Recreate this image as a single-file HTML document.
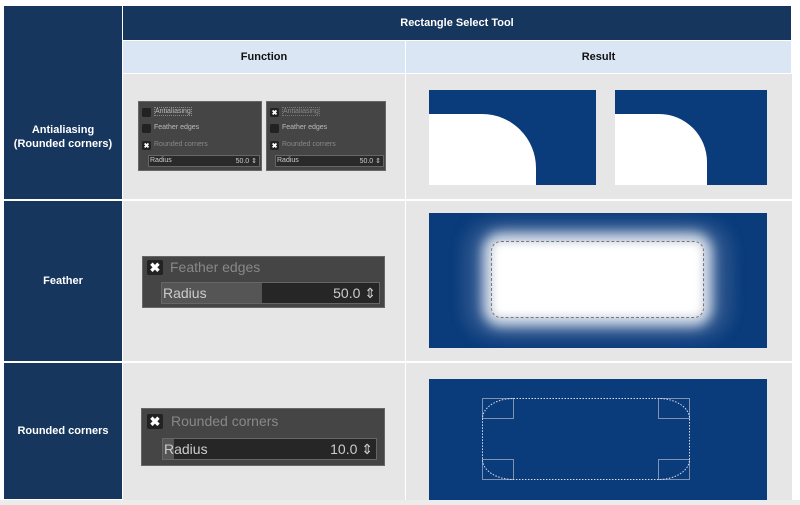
<!DOCTYPE html>
<html><head><meta charset="utf-8"><style>
*{margin:0;padding:0;box-sizing:border-box}
body{width:800px;height:505px;background:#fff;position:relative;overflow:hidden;font-family:"Liberation Sans",sans-serif}
.a{position:absolute}
.nav{background:#17365d;color:#fff;font-weight:bold;font-size:11px;display:flex;align-items:center;justify-content:center;text-align:center;line-height:14px}
.lb{background:#dbe6f5;color:#111;font-weight:bold;font-size:11px;display:flex;align-items:center;justify-content:center}
.g{background:#e6e6e6}
.w{background:#454545;border:1px solid #666}
.cb{position:absolute;background:#222;border-radius:2px;color:#fff;font-weight:bold;display:flex;align-items:center;justify-content:center}
.t{position:absolute;color:#999;white-space:nowrap}
.f{position:absolute;background:#2a2a2a;border:1px solid #666;color:#ccc}
.blue{background:#0a3b7b}
</style></head><body>
<div class="a" style="left:0;top:500px;width:800px;height:5px;background:#ececec"></div>
<div class="a nav" style="left:4px;top:6px;width:118px;height:68px"></div>
<div class="a nav" style="left:123px;top:6px;width:668px;height:34px">Rectangle Select Tool</div>
<div class="a lb" style="left:123px;top:41px;width:282px;height:32px">Function</div>
<div class="a lb" style="left:406px;top:41px;width:385px;height:32px">Result</div>
<div class="a nav" style="left:4px;top:74px;width:118px;height:125px">Antialiasing<br>(Rounded corners)</div>
<div class="a nav" style="left:4px;top:201px;width:118px;height:160px">Feather</div>
<div class="a nav" style="left:4px;top:363px;width:118px;height:136px">Rounded corners</div>
<div class="a g" style="left:123px;top:74px;width:282px;height:125px"></div>
<div class="a g" style="left:406px;top:74px;width:386px;height:125px"></div>
<div class="a g" style="left:123px;top:201px;width:282px;height:160px"></div>
<div class="a g" style="left:406px;top:201px;width:386px;height:160px"></div>
<div class="a g" style="left:123px;top:363px;width:282px;height:137px"></div>
<div class="a g" style="left:406px;top:363px;width:386px;height:137px"></div>

<!-- widget 1 -->
<div class="a w" style="left:138px;top:101px;width:124px;height:70px;font-size:7px">
 <div class="cb" style="left:3px;top:6px;width:9px;height:9px"></div><div class="t" style="left:15px;top:5px;color:#bbb;border:1px dotted #888">Antialiasing</div>
 <div class="cb" style="left:3px;top:22px;width:9px;height:9px"></div><div class="t" style="left:15px;top:22px;color:#bbb">Feather edges</div>
 <div class="cb" style="left:3px;top:39px;width:9px;height:9px;font-size:7px">✖</div><div class="t" style="left:15px;top:39px;color:#888">Rounded corners</div>
 <div class="f" style="left:9px;top:53px;width:112px;height:12px"><span style="position:absolute;left:1px;top:1px">Radius</span><span style="position:absolute;right:2px;top:1px">50.0 ⇕</span></div>
</div>
<div class="a w" style="left:266px;top:101px;width:120px;height:70px;font-size:7px">
 <div class="cb" style="left:3px;top:6px;width:9px;height:9px;font-size:7px">✖</div><div class="t" style="left:15px;top:5px;color:#888;border:1px dotted #777">Antialiasing</div>
 <div class="cb" style="left:3px;top:22px;width:9px;height:9px"></div><div class="t" style="left:15px;top:22px;color:#bbb">Feather edges</div>
 <div class="cb" style="left:3px;top:39px;width:9px;height:9px;font-size:7px">✖</div><div class="t" style="left:15px;top:39px;color:#888">Rounded corners</div>
 <div class="f" style="left:8px;top:53px;width:109px;height:12px"><span style="position:absolute;left:1px;top:1px">Radius</span><span style="position:absolute;right:2px;top:1px">50.0 ⇕</span></div>
</div>

<!-- widget feather -->
<div class="a w" style="left:142px;top:256px;width:243px;height:52px;font-size:14px">
 <div class="cb" style="left:4px;top:3px;width:16px;height:15px;font-size:13px">✖</div><div class="t" style="left:27px;top:2px;color:#888">Feather edges</div>
 <div class="f" style="left:18px;top:25px;width:219px;height:22px;background:#262626"><div style="position:absolute;left:0;top:0;width:100px;height:20px;background:#555"></div><span style="position:absolute;left:1px;top:2px;color:#ccc">Radius</span><span style="position:absolute;right:3px;top:2px">50.0 ⇕</span></div>
</div>
<!-- widget rounded -->
<div class="a w" style="left:141px;top:408px;width:244px;height:58px;font-size:14px">
 <div class="cb" style="left:5px;top:5px;width:16px;height:15px;font-size:13px">✖</div><div class="t" style="left:29px;top:4px;color:#888">Rounded corners</div>
 <div class="f" style="left:20px;top:29px;width:215px;height:22px;background:#262626"><div style="position:absolute;left:0;top:0;width:11px;height:20px;background:#555"></div><span style="position:absolute;left:1px;top:2px">Radius</span><span style="position:absolute;right:3px;top:2px">10.0 ⇕</span></div>
</div>

<!-- result 1 -->
<div class="a blue" style="left:429px;top:90px;width:167px;height:95px;overflow:hidden">
 <div class="a" style="left:-60px;top:24px;width:167px;height:120px;background:#fff;border-top-right-radius:54px"></div>
</div>
<div class="a blue" style="left:615px;top:90px;width:152px;height:95px;overflow:hidden">
 <div class="a" style="left:-60px;top:24px;width:152px;height:120px;background:#fff;border-top-right-radius:48px"></div>
</div>
<!-- result 2 -->
<div class="a blue" style="left:429px;top:213px;width:338px;height:135px;overflow:hidden">
 <div class="a" style="left:30px;top:8px;width:277px;height:118px;background:rgba(255,255,255,.06);border-radius:30px;filter:blur(6px)"></div>
 <div class="a" style="left:62px;top:28px;width:213px;height:77px;background:#fff;border-radius:10px;box-shadow:inset 0 0 8px 2px rgba(200,205,220,.9),0 0 12px 8px rgba(255,255,255,.8),0 0 26px 14px rgba(160,175,210,.35)"></div>
 <div class="a" style="left:62px;top:28px;width:213px;height:77px;border-radius:10px;border:1px dashed #777"></div>
</div>
<!-- result 3 -->
<div class="a blue" style="left:429px;top:379px;width:338px;height:121px">
 <svg width="338" height="121" style="position:absolute;left:0;top:0">
  <g fill="none" stroke="#8e9cb8" stroke-width="0.9">
   <rect x="53.5" y="19.5" width="31" height="20"/><rect x="229.5" y="19.5" width="31" height="20"/>
   <rect x="53.5" y="80.5" width="31" height="20"/><rect x="229.5" y="80.5" width="31" height="20"/>
  </g>
  <rect x="53.5" y="19.5" width="207" height="81" rx="31" ry="20" fill="none" stroke="#dde" stroke-width="1" stroke-dasharray="1.5 1.5"/>
 </svg>
</div>
</body></html>
